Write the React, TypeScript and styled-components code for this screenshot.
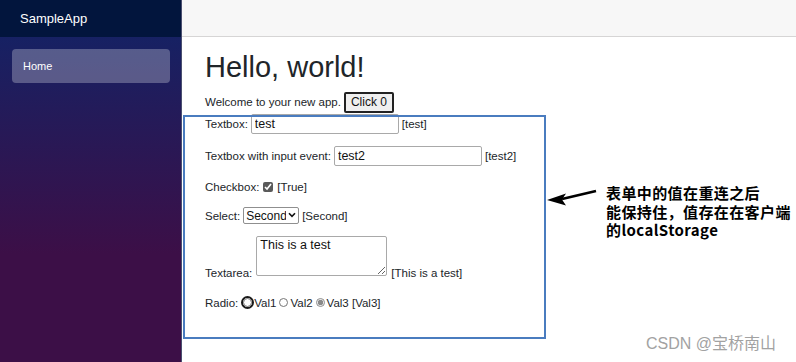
import React from "react";
import styled, { createGlobalStyle } from "styled-components";

const GlobalStyle = createGlobalStyle`
  html, body {
    margin: 0;
    padding: 0;
    background: #ffffff;
  }
  body {
    font-family: "Liberation Sans", Arial, sans-serif;
  }
`;

const StyledPage = styled.div`
  position: relative;
  display: flex;
  width: 796px;
  height: 362px;
  overflow: hidden;
  background: #ffffff;
`;

const StyledSidebar = styled.div`
  display: flex;
  flex-direction: column;
  width: 181px;
  flex-shrink: 0;
  background-image: linear-gradient(180deg, #102468 0%, #3c0f47 70%);
  border-right: 1px solid #4a4f70;
`;

const StyledBrandBar = styled.div`
  display: flex;
  align-items: center;
  height: 37px;
  padding-left: 20px;
  background-color: #02153d;
  color: #ffffff;
  font-size: 13px;
  box-sizing: border-box;
`;

const StyledNav = styled.nav`
  padding: 12px 11px 0 12px;
`;

const StyledNavItem = styled.div`
  display: flex;
  align-items: center;
  height: 34px;
  padding-left: 11px;
  border-radius: 4px;
  background-color: rgba(255, 255, 255, 0.27);
  color: #ffffff;
  font-size: 11px;
`;

const StyledMain = styled.div`
  display: flex;
  flex-direction: column;
  flex: 1;
`;

const StyledTopRow = styled.div`
  height: 36px;
  background-color: #f7f7f7;
  border-bottom: 1px solid #d6d5d5;
`;

const StyledContent = styled.div`
  display: flex;
  flex-direction: column;
  padding-left: 23px;
  color: #212529;
  font-size: 11.5px;
`;

const StyledTitle = styled.h1`
  margin: 13px 0 0;
  font-size: 29px;
  font-weight: 400;
  line-height: 1.2;
`;

const StyledRow = styled.div<{ $top: number; $height?: number; $align?: string }>`
  display: flex;
  align-items: ${(p) => p.$align || "center"};
  gap: 3px;
  margin-top: ${(p) => p.$top}px;
  height: ${(p) => p.$height || 20}px;
  white-space: nowrap;
`;

const StyledButton = styled.button`
  height: 21px;
  padding: 0 5px;
  border: 2px solid #222222;
  border-radius: 2px;
  background-color: #efefef;
  color: #111111;
  font-family: "Liberation Sans", Arial, sans-serif;
  font-size: 12px;
`;

const StyledTextInput = styled.input<{ $width: number }>`
  box-sizing: border-box;
  width: ${(p) => p.$width}px;
  height: 20px;
  padding: 0 3px;
  border: 1px solid #a9a9a9;
  border-radius: 2px;
  color: #111111;
  font-family: "Liberation Sans", Arial, sans-serif;
  font-size: 12.5px;
  outline: none;
`;

const StyledCheckbox = styled.input`
  width: 10px;
  height: 10px;
  margin: 0 1px;
  accent-color: #5a5a5a;
`;

const StyledSelectWrap = styled.span`
  position: relative;
  display: inline-flex;
`;

const StyledSelect = styled.select`
  box-sizing: border-box;
  width: 56px;
  height: 17px;
  padding: 0 12px 0 2px;
  border: 1px solid #8f8f8f;
  border-radius: 2px;
  background: #ffffff;
  color: #111111;
  font-family: "Liberation Sans", Arial, sans-serif;
  font-size: 12px;
  appearance: none;
  outline: none;
`;

const StyledChevron = styled.svg`
  position: absolute;
  right: 3px;
  top: 5px;
  pointer-events: none;
`;

const StyledTextarea = styled.textarea`
  box-sizing: border-box;
  width: 131px;
  height: 40px;
  margin: 0 1px;
  padding: 2px 3px;
  border: 1px solid #a9a9a9;
  border-radius: 2px;
  color: #111111;
  font-family: "Liberation Sans", Arial, sans-serif;
  font-size: 12.5px;
  line-height: 1.1;
  outline: none;
`;

const StyledTextareaLabel = styled.span`
  line-height: 14px;
  position: relative;
  top: 4px;
`;

const StyledRadioGroup = styled.div`
  display: flex;
  align-items: center;
`;

const StyledFocusRing = styled.span`
  display: inline-flex;
  align-items: center;
  justify-content: center;
  box-sizing: border-box;
  width: 13px;
  height: 13px;
  margin: 0 0 0 3px;
  border: 2px solid #1a1a1a;
  border-radius: 50%;
`;

const StyledRadio = styled.input<{ $inRing?: boolean }>`
  width: 9px;
  height: 9px;
  margin: ${(p) => (p.$inRing ? "0" : "0 2px 0 3px")};
  accent-color: #8a8a8a;
`;

const StyledNoteBox = styled.div`
  position: absolute;
  left: 183px;
  top: 115px;
  width: 363px;
  height: 224px;
  box-sizing: border-box;
  border: 2px solid #4a7cbf;
  pointer-events: none;
`;

const StyledArrow = styled.svg`
  position: absolute;
  left: 546px;
  top: 186px;
`;

const StyledNote = styled.div`
  position: absolute;
  left: 606px;
  top: 184px;
  color: #000000;
  font-family: "Noto Sans CJK SC", sans-serif;
  font-size: 15px;
  font-weight: 700;
  line-height: 18.5px;
  letter-spacing: 0.4px;
`;

const StyledWatermark = styled.div`
  position: absolute;
  left: 646px;
  top: 334px;
  color: #a2a2a2;
  font-family: "Liberation Sans", "Noto Sans CJK SC", sans-serif;
  font-size: 16px;
  line-height: 20px;
`;

const App = () => {
  return (
    <StyledPage>
      <GlobalStyle />
      <StyledSidebar>
        <StyledBrandBar>SampleApp</StyledBrandBar>
        <StyledNav>
          <StyledNavItem>Home</StyledNavItem>
        </StyledNav>
      </StyledSidebar>
      <StyledMain>
        <StyledTopRow />
        <StyledContent>
          <StyledTitle>Hello, world!</StyledTitle>
          <StyledRow $top={7} $height={21}>
            Welcome to your new app.
            <StyledButton>Click 0</StyledButton>
          </StyledRow>
          <StyledRow $top={1}>
            Textbox:
            <StyledTextInput $width={148} defaultValue="test" />
            [test]
          </StyledRow>
          <StyledRow $top={12}>
            Textbox with input event:
            <StyledTextInput $width={148} defaultValue="test2" />
            [test2]
          </StyledRow>
          <StyledRow $top={11}>
            Checkbox:
            <StyledCheckbox type="checkbox" defaultChecked />
            [True]
          </StyledRow>
          <StyledRow $top={9}>
            Select:
            <StyledSelectWrap>
              <StyledSelect defaultValue="Second">
                <option>First</option>
                <option>Second</option>
                <option>Third</option>
              </StyledSelect>
              <StyledChevron width="8" height="6" viewBox="0 0 8 6">
                <path d="M1 1.2 L4 4.4 L7 1.2" stroke="#111" strokeWidth="1.6" fill="none" />
              </StyledChevron>
            </StyledSelectWrap>
            [Second]
          </StyledRow>
          <StyledRow $top={10} $height={40} $align="flex-end">
            <StyledTextareaLabel>Textarea:</StyledTextareaLabel>
            <StyledTextarea defaultValue="This is a test" />
            <StyledTextareaLabel>[This is a test]</StyledTextareaLabel>
          </StyledRow>
          <StyledRow $top={17}>
            <StyledRadioGroup>
              Radio:
              <StyledFocusRing>
                <StyledRadio type="radio" name="r" $inRing />
              </StyledFocusRing>
              Val1
              <StyledRadio type="radio" name="r" />
              Val2
              <StyledRadio type="radio" name="r" defaultChecked />
              Val3 [Val3]
            </StyledRadioGroup>
          </StyledRow>
        </StyledContent>
      </StyledMain>

      <StyledNoteBox />
      <StyledArrow width="54" height="24" viewBox="0 0 54 24">
        <path d="M16 13 L50 5" stroke="#000" strokeWidth="2.6" fill="none" />
        <path d="M1 14 L20 7.5 L16 13.5 L20 19.5 Z" fill="#000" />
      </StyledArrow>
      <StyledNote>
        表单中的值在重连之后
        <br />
        能保持住，值存在在客户端
        <br />
        的localStorage
      </StyledNote>
      <StyledWatermark>CSDN @宝桥南山</StyledWatermark>
    </StyledPage>
  );
};

export default App;
